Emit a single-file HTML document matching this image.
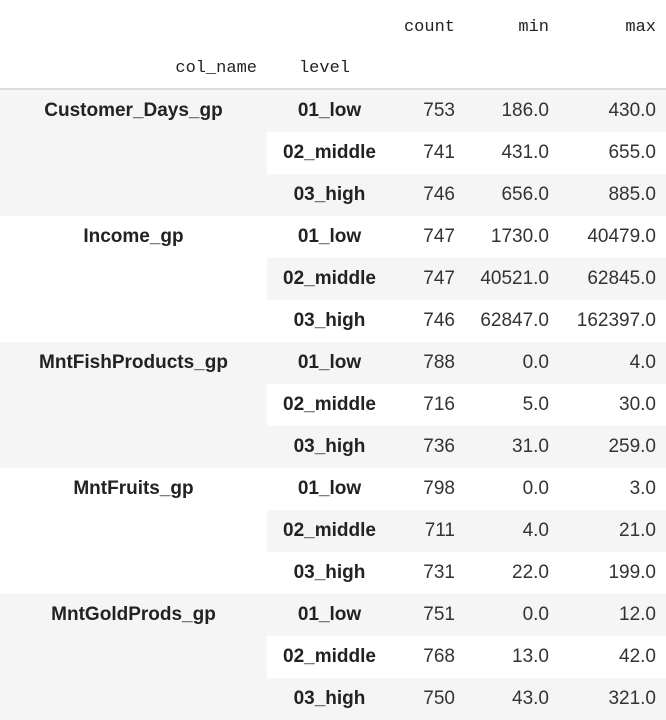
<!DOCTYPE html>
<html><head><style>
body{margin:0;background:#fff;width:666px;height:658px;overflow:hidden;font-family:"Liberation Sans",sans-serif;color:#000}
table{border-collapse:collapse;table-layout:fixed;width:666px;position:absolute;left:0;top:0}
td,th{padding:0 10px 0 0;white-space:nowrap;font-size:19px;height:42px;line-height:42px;box-sizing:border-box}
thead th{font-family:"Liberation Mono",monospace;font-weight:normal;font-size:17px;text-align:right;color:#222}
thead tr.r1 th{height:48px;line-height:40px;padding-top:8px;vertical-align:top}
thead tr.r2 th{height:41px;line-height:34px;padding-top:4px;vertical-align:top}
tbody tr:first-child td,tbody tr:first-child th{border-top:2px solid #ddd}
.idx{text-align:center;vertical-align:top;font-weight:bold;padding:0;color:#222}
.lv{text-align:center;font-weight:bold;padding:0;color:#222}
td{text-align:right;color:#333}
.g{background:#f5f5f5}
</style></head><body>
<table>
<colgroup><col style="width:267px"><col style="width:125px"><col style="width:73px"><col style="width:94px"><col style="width:107px"></colgroup>
<thead>
<tr class="r1"><th></th><th></th><th>count</th><th>min</th><th>max</th></tr>
<tr class="r2"><th style="text-align:right;padding-right:10px">col_name</th><th style="text-align:center;padding-right:10px">level</th><th></th><th></th><th></th></tr>
</thead>
<tbody>
<tr class="g"><th class="idx g" rowspan="3">Customer_Days_gp</th><th class="lv">01_low</th><td>753</td><td>186.0</td><td>430.0</td></tr>
<tr><th class="lv">02_middle</th><td>741</td><td>431.0</td><td>655.0</td></tr>
<tr class="g"><th class="lv">03_high</th><td>746</td><td>656.0</td><td>885.0</td></tr>
<tr><th class="idx" rowspan="3">Income_gp</th><th class="lv">01_low</th><td>747</td><td>1730.0</td><td>40479.0</td></tr>
<tr class="g"><th class="lv">02_middle</th><td>747</td><td>40521.0</td><td>62845.0</td></tr>
<tr><th class="lv">03_high</th><td>746</td><td>62847.0</td><td>162397.0</td></tr>
<tr class="g"><th class="idx g" rowspan="3">MntFishProducts_gp</th><th class="lv">01_low</th><td>788</td><td>0.0</td><td>4.0</td></tr>
<tr><th class="lv">02_middle</th><td>716</td><td>5.0</td><td>30.0</td></tr>
<tr class="g"><th class="lv">03_high</th><td>736</td><td>31.0</td><td>259.0</td></tr>
<tr><th class="idx" rowspan="3">MntFruits_gp</th><th class="lv">01_low</th><td>798</td><td>0.0</td><td>3.0</td></tr>
<tr class="g"><th class="lv">02_middle</th><td>711</td><td>4.0</td><td>21.0</td></tr>
<tr><th class="lv">03_high</th><td>731</td><td>22.0</td><td>199.0</td></tr>
<tr class="g"><th class="idx g" rowspan="3">MntGoldProds_gp</th><th class="lv">01_low</th><td>751</td><td>0.0</td><td>12.0</td></tr>
<tr><th class="lv">02_middle</th><td>768</td><td>13.0</td><td>42.0</td></tr>
<tr class="g"><th class="lv">03_high</th><td>750</td><td>43.0</td><td>321.0</td></tr>
</tbody>
</table>
</body></html>
